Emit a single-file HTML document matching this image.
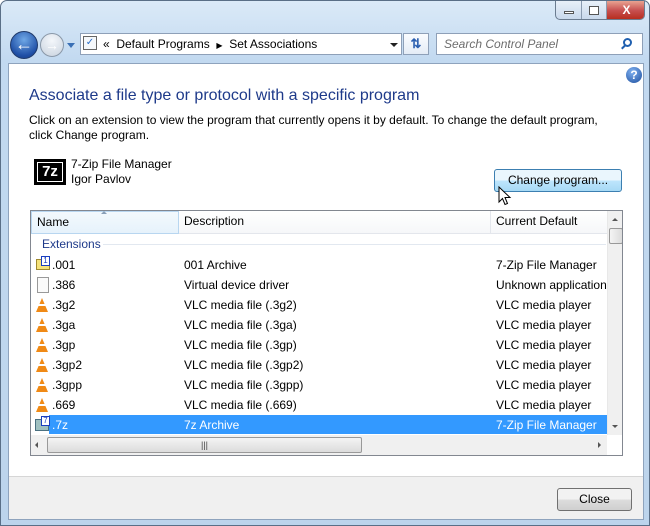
<!DOCTYPE html>
<html><head><style>
*{margin:0;padding:0;box-sizing:border-box}
body{width:650px;height:526px;overflow:hidden;font-family:"Liberation Sans",sans-serif;font-size:12px;color:#000;background:#fff}
.frame{position:absolute;left:0;top:0;width:650px;height:526px;border-radius:7px 7px 0 0;background:linear-gradient(#dbeaf8,#c2d9f0 60px,#bcd4ec);border:1px solid #5a6f87}
.abs{position:absolute}
.content{position:absolute;left:7px;top:62px;width:636px;height:457px;background:#fff;border:1px solid #8ea3bd}
.bottom{position:absolute;left:0;top:412px;width:634px;height:43px;background:#f0f0f0;border-top:1px solid #d6d6d6}
.btn{position:absolute;border:1px solid #707070;border-radius:3px;background:linear-gradient(#f2f2f2 50%,#dddddd 50%,#cfcfcf);text-align:center;font-size:12px}
.row{position:absolute;left:1px;width:575px;height:20px;line-height:20px}
.row span{position:absolute}
.c1{left:20px}.c2{left:152px}.c3{left:464px;white-space:nowrap;overflow:hidden;width:111px}
.cone{position:absolute;left:4px;top:3px;width:0;height:0;border-left:6px solid transparent;border-right:6px solid transparent;border-bottom:14px solid #f08a16}
.cone:after{content:"";position:absolute;left:-4px;top:6px;width:8px;height:2px;background:#fff}
</style></head><body>
<div class="frame">
 <div class="abs" style="left:554px;top:0;width:90px;height:19px;border:1px solid #6b7c90;border-top:none;border-radius:0 0 5px 5px;overflow:hidden;background:linear-gradient(#e8f0f9,#c9d9ec)">
  <div class="abs" style="left:0;top:0;width:26px;height:19px;border-right:1px solid #8a9bb0"><div class="abs" style="left:8px;top:10px;width:10px;height:3px;border:1px solid #555;background:#fff"></div></div>
  <div class="abs" style="left:26px;top:0;width:25px;height:19px;border-right:1px solid #8a9bb0"><div class="abs" style="left:7px;top:5px;width:10px;height:9px;border:1px solid #555;background:#fff"></div></div>
  <div class="abs" style="left:51px;top:0;width:39px;height:19px;background:linear-gradient(#e8a391,#c75050 50%,#b52a1a);color:#fff;font-weight:bold;text-align:center;line-height:18px;font-size:12px">X</div>
 </div>
 <div class="abs" style="left:9px;top:30px;width:28px;height:28px;border-radius:50%;background:radial-gradient(circle at 50% 30%,#6fa8e6,#1f4fa6 70%,#1a3a7a);border:1px solid #203a6a;color:#fff;font-size:18px;font-weight:bold;line-height:24px;text-align:center">&#8592;</div>
 <div class="abs" style="left:39px;top:32px;width:24px;height:24px;border-radius:50%;background:radial-gradient(circle at 50% 30%,#f4f7fb,#c8d2de);border:1px solid #8a98a8;color:#fff;text-align:center;line-height:22px;font-size:14px">&#8594;</div>
 <div class="abs" style="left:66px;top:42px;width:0;height:0;border-left:4px solid transparent;border-right:4px solid transparent;border-top:5px solid #3a6fb5"></div>
 <div class="abs" style="left:79px;top:32px;width:322px;height:22px;background:#fff;border:1px solid #8ea0b8"></div>
 <div class="abs" style="left:82px;top:35px;width:14px;height:14px;border:1px solid #666;background:#f5f8fb;color:#2a6fc9;font-size:10px;line-height:12px;text-align:center">&#10003;</div>
 <div class="abs" style="left:102px;top:36px;font-size:12px">&laquo;&nbsp;&nbsp;Default Programs&nbsp;&nbsp;<span style="font-size:8px">&#9654;</span>&nbsp;&nbsp;Set Associations</div>
 <div class="abs" style="left:389px;top:42px;width:0;height:0;border-left:4px solid transparent;border-right:4px solid transparent;border-top:4px solid #222"></div>
 <div class="abs" style="left:402px;top:32px;width:26px;height:22px;background:linear-gradient(#fafcff,#e4ecf6);border:1px solid #8ea0b8;color:#2b5fb0;font-weight:bold;text-align:center;line-height:20px;font-size:13px">&#8645;</div>
 <div class="abs" style="left:435px;top:32px;width:207px;height:22px;background:#fff;border:1px solid #8ea0b8;color:#6d6d6d;font-style:italic;line-height:20px;padding-left:7px">Search Control Panel</div>
 <div class="abs" style="left:622px;top:37px;width:9px;height:9px;border:2px solid #2060b0;border-radius:50%"></div>
 <div class="abs" style="left:620px;top:45px;width:5px;height:2px;background:#2060b0;transform:rotate(-45deg)"></div>

 <div class="content">
  <div class="abs" style="left:617px;top:3px;width:16px;height:16px;border-radius:50%;background:radial-gradient(circle at 40% 30%,#7fb0f0,#1d4f9e);color:#fff;font-weight:bold;font-size:12px;text-align:center;line-height:16px">?</div>
  <div class="abs" style="left:20px;top:23px;font-size:16px;color:#1e3a8a">Associate a file type or protocol with a specific program</div>
  <div class="abs" style="left:20px;top:49px;line-height:15px;width:575px">Click on an extension to view the program that currently opens it by default. To change the default program, click Change program.</div>
  <div class="abs" style="left:25px;top:95px;width:32px;height:26px;border:3px solid #000;background:#fff"><div class="abs" style="left:1px;top:1px;width:24px;height:18px;background:#000;color:#fff;font-weight:bold;font-size:15px;line-height:18px;text-align:center">7z</div></div>
  <div class="abs" style="left:62px;top:93px;line-height:15px">7-Zip File Manager<br>Igor Pavlov</div>
  <div class="btn" style="left:485px;top:105px;width:128px;height:23px;line-height:21px;border-color:#3c7fb1;background:linear-gradient(#eaf6fd 50%,#bee6fd 50%,#a7d9f5)">Change program...</div>
  <svg class="abs" style="left:489px;top:122px" width="14" height="20" viewBox="0 0 14 20"><path d="M1 1 L1 16 L4.5 12.5 L7 18.5 L9.5 17.5 L7 11.5 L12 11.5 Z" fill="#fff" stroke="#000" stroke-width="1"/></svg>

  <div class="abs" style="left:21px;top:146px;width:593px;height:246px;border:1px solid #828790;background:#fff;overflow:hidden">
   <div class="abs" style="left:0;top:0;width:576px;height:23px;background:linear-gradient(#fff,#f6f7f9);border-bottom:1px solid #e3e6ec;line-height:21px">
    <div class="abs" style="left:0;top:0;width:148px;height:23px;border:1px solid #b8d6f0;background:linear-gradient(#f3f9fd,#e6f2fb);padding-left:5px">Name</div>
    <div class="abs" style="left:70px;top:0;width:0;height:0;border-left:3px solid transparent;border-right:3px solid transparent;border-bottom:3px solid #8aa0b8"></div>
    <div class="abs" style="left:148px;top:0;width:312px;height:23px;border-right:1px solid #e3e6ec;padding-left:5px">Description</div>
    <div class="abs" style="left:460px;top:0;padding-left:5px">Current Default</div>
   </div>
   <div class="abs" style="left:11px;top:26px;color:#1e3a8a">Extensions</div>
   <div class="abs" style="left:72px;top:33px;width:503px;height:1px;background:#e2e8f0"></div>
   <div class="row" style="top:44px"><div class="abs" style="left:4px;top:4px;width:14px;height:11px;background:#f5e27a;border:1px solid #a08a30"></div><div class="abs" style="left:9px;top:1px;width:9px;height:10px;border:1px solid #1a3fc0;background:#fff;font-size:8px;line-height:8px;text-align:center;color:#1a3fc0">1</div><span class="c1">.001</span><span class="c2">001 Archive</span><span class="c3">7-Zip File Manager</span></div>
   <div class="row" style="top:64px"><div class="abs" style="left:5px;top:2px;width:12px;height:16px;border:1px solid #999;background:#fafafa"></div><span class="c1">.386</span><span class="c2">Virtual device driver</span><span class="c3">Unknown application</span></div>
   <div class="row" style="top:84px"><div class="cone"></div><span class="c1">.3g2</span><span class="c2">VLC media file (.3g2)</span><span class="c3">VLC media player</span></div>
   <div class="row" style="top:104px"><div class="cone"></div><span class="c1">.3ga</span><span class="c2">VLC media file (.3ga)</span><span class="c3">VLC media player</span></div>
   <div class="row" style="top:124px"><div class="cone"></div><span class="c1">.3gp</span><span class="c2">VLC media file (.3gp)</span><span class="c3">VLC media player</span></div>
   <div class="row" style="top:144px"><div class="cone"></div><span class="c1">.3gp2</span><span class="c2">VLC media file (.3gp2)</span><span class="c3">VLC media player</span></div>
   <div class="row" style="top:164px"><div class="cone"></div><span class="c1">.3gpp</span><span class="c2">VLC media file (.3gpp)</span><span class="c3">VLC media player</span></div>
   <div class="row" style="top:184px"><div class="cone"></div><span class="c1">.669</span><span class="c2">VLC media file (.669)</span><span class="c3">VLC media player</span></div>
   <div class="row" style="top:204px"><div class="abs" style="left:17px;top:0;width:558px;height:19px;background:#3399ff"></div><div class="abs" style="left:3px;top:4px;width:14px;height:12px;background:#9fc0c0;border:1px solid #4a7080"></div><div class="abs" style="left:9px;top:1px;width:9px;height:10px;border:1px solid #1a3fc0;background:#fff;font-size:8px;line-height:8px;text-align:center;color:#1a3fc0">7</div><span class="c1" style="color:#fff">.7z</span><span class="c2" style="color:#fff">7z Archive</span><span class="c3" style="color:#fff">7-Zip File Manager</span></div>
   <div class="abs" style="left:576px;top:0;width:16px;height:224px;background:#f0f0f0;border-left:1px solid #e8e8e8"><div class="abs" style="left:4px;top:7px;border-left:3px solid transparent;border-right:3px solid transparent;border-bottom:3px solid #555"></div><div class="abs" style="left:1px;top:17px;width:14px;height:16px;border:1px solid #999;border-radius:2px;background:linear-gradient(90deg,#f4f4f4,#dcdcdc)"></div><div class="abs" style="left:4px;top:214px;border-left:3px solid transparent;border-right:3px solid transparent;border-top:3px solid #555"></div></div>
   <div class="abs" style="left:0;top:224px;width:576px;height:20px;background:#f0f0f0"><div class="abs" style="left:4px;top:7px;border-top:3px solid transparent;border-bottom:3px solid transparent;border-right:3px solid #555"></div><div class="abs" style="left:16px;top:2px;width:315px;height:16px;border:1px solid #999;border-radius:2px;background:linear-gradient(#f4f4f4,#dcdcdc);text-align:center;font-size:9px;line-height:14px;color:#444">|||</div><div class="abs" style="left:567px;top:7px;border-top:3px solid transparent;border-bottom:3px solid transparent;border-left:3px solid #555"></div></div>
  </div>

  <div class="bottom">
   <div class="btn" style="left:548px;top:11px;width:75px;height:23px;line-height:21px">Close</div>
  </div>
 </div>
</div>
</body></html>
